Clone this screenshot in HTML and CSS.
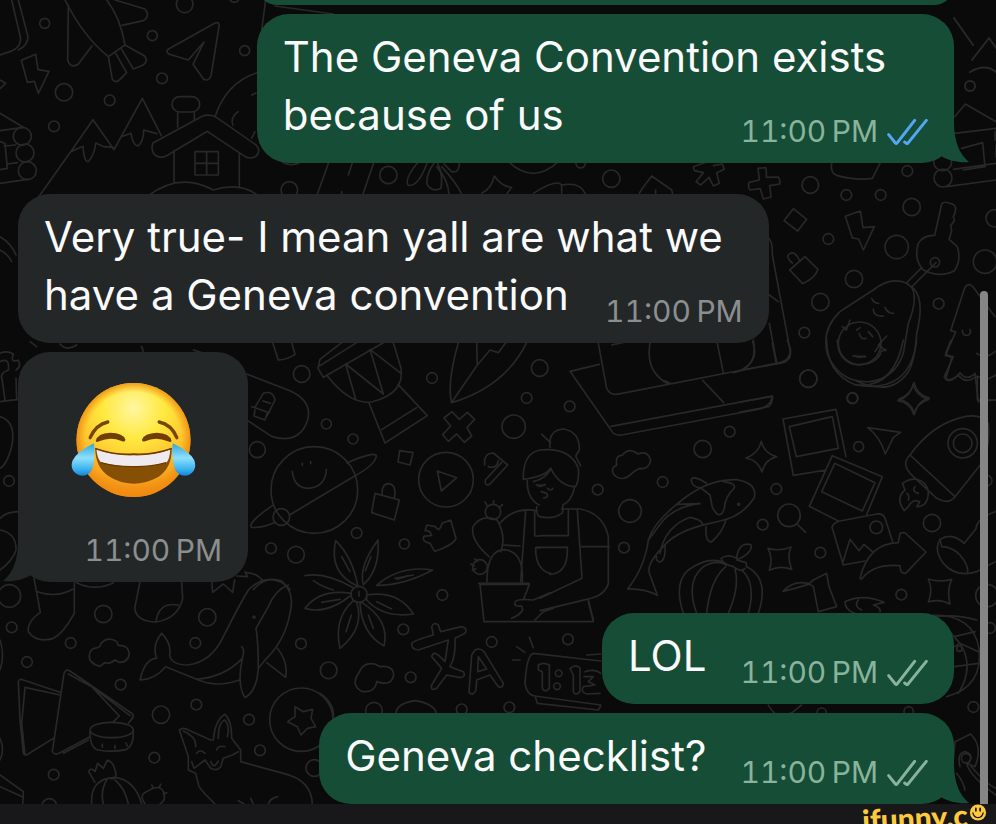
FILE: index.html
```html
<!DOCTYPE html>
<html lang="en">
<head>
<meta charset="utf-8">
<meta name="viewport" content="width=device-width, initial-scale=1">
<title>Chat</title>
<link rel="stylesheet" href="styles.css">
</head>
<body>
<svg class="defs" aria-hidden="true">
  <symbol id="ticks" viewBox="0 0 126 84"><path d="M8 53L28 78Q31 81 34 77L86 10M56 75L61 79Q64 81 67 77L121 10"/></symbol>
  <symbol id="tail" viewBox="0 0 45 40"><path d="M30 0C30 17 35 31 45 39C36 40 25 38 17 33L8 20L16 0Z"/></symbol>
  <symbol id="spark" viewBox="-50 -50 100 100"><path d="M0-46Q8-10 46 0Q10 10 2 46Q-10 10-46 4Q-8-10 0-46Z"/></symbol>
</svg>
<main class="chat">
  <svg class="wallpaper" viewBox="0 0 996 804" preserveAspectRatio="xMinYMin slice" aria-hidden="true">
    <g transform="scale(.33333)">
      <circle cx="134" cy="70" r="15"/><circle cx="457" cy="107" r="15"/><circle cx="554" cy="13" r="25"/><circle cx="734" cy="152" r="15"/><circle cx="486" cy="235" r="16"/><circle cx="192" cy="277" r="26"/><circle cx="329" cy="301" r="16"/><circle cx="162" cy="379" r="16"/><circle cx="703" cy="-8" r="15"/>
      <path d="M35 0L62 115Q62 145 30 155L0 165M55 0L84 110Q84 135 55 150"/>
      <path d="M195 0Q250 110 325 170L375 135Q360 50 320 0M205 15L203 180Q212 208 235 192L276 138M345 0L435 27Q452 48 430 62L366 76M325 170L337 238Q347 252 360 238L380 218L347 160M375 135L434 168Q445 185 430 195L400 207L365 148"/>
      <path d="M645 69Q660 64 657 80L633 228Q625 245 611 238L579 193L612 126L565 180L506 162Q495 153 507 146Z"/>
      <path d="M64 181L107 163L114 209L147 214L115 280L103 244L82 247ZM0 240L17 250L0 266"/>
      <path d="M0 340L70 382L0 392M0 425L15 430L22 505L0 509M12 438L47 435M20 492L53 488M0 550L83 538"/><circle cx="67" cy="409" r="27"/><circle cx="75" cy="459" r="27"/><circle cx="82" cy="512" r="27"/>
      <path d="M60 670L212 455L279 359L342 449L427 295L484 407M212 455L249 439Q253 490 266 484Q284 463 287 429L312 440L340 442M368 409L393 400Q400 440 416 437Q431 422 431 390L470 401"/>
      <rect x="516" y="290" width="83" height="46" rx="23"/><path d="M533 338V382M583 338V358"/>
      <path d="M460 428L608 348Q627 342 646 350L767 434Q785 451 768 469Q748 480 731 467L622 394L500 467Q475 479 460 459Q452 442 460 428ZM522 452V548M718 462V563M585 455H655V525H585ZM620 455V525M585 490H655M445 587Q540 515 640 570Q720 545 775 587"/>
      <path d="M645 350Q680 245 775 217M714 335Q690 355 699 375M755 285L768 279M755 415L765 395"/>
      <path d="M797 0L785 90M825 18L1000 42"/>
    </g>
    <g transform="translate(260 130) scale(.33333)">
      <circle cx="88" cy="180" r="25"/><circle cx="385" cy="135" r="26"/><circle cx="1054" cy="146" r="26"/><circle cx="962" cy="100" r="14"/>
      <path d="M58 90Q95 118 130 90M207 95L173 190M278 95L265 135M342 95L308 195M245 185V200M475 95Q430 150 445 166Q475 172 502 97M525 95Q495 135 502 165Q520 188 543 175Q550 130 530 95M545 110Q590 160 607 195M530 110Q565 150 567 195M598 95Q600 130 575 125L552 102M745 95Q820 165 895 95M665 190Q695 175 703 138Q725 170 755 172L740 192M820 190Q890 145 905 165V190M905 165Q960 155 975 190M1138 190L1145 178L1175 138L1235 180L1238 192M1187 180V190"/>
      <path d="M1338 97L1300 110L1303 122L1330 128L1308 155L1322 165L1347 142L1360 168L1378 160L1370 128L1393 118L1387 102L1360 107"/>
    </g>
    <g transform="translate(700 90) scale(.33333)">
      <path d="M764 80L796 42L888 95M764 130L888 115M785 175L848 158L855 230L790 240M885 125V150M888 165V200M740 290L888 270M760 238L888 220"/><circle cx="728" cy="215" r="27"/><circle cx="729" cy="264" r="27"/>
    </g>
    <g transform="translate(740 160) scale(.33333)">
      <path d="M54 25L76 23Q80 27 79 52L114 51Q122 57 119 72L89 77L93 111L70 117L61 86L30 90Q23 83 27 67L58 60ZM275 10Q270 38 290 46Q345 62 397 55L420 10M160 146L200 178L173 213L132 182ZM149 330L195 290L234 328Q225 355 188 371ZM157 309Q135 290 149 281Q165 272 178 300M316 169L361 153L369 203L403 200L370 270L356 237L337 234Z"/>
      <circle cx="211" cy="75" r="25"/><circle cx="319" cy="105" r="16"/><circle cx="422" cy="105" r="16"/><circle cx="502" cy="33" r="16"/><circle cx="515" cy="141" r="26"/><circle cx="470" cy="261" r="35"/><circle cx="265" cy="237" r="16"/><circle cx="342" cy="357" r="26"/><circle cx="241" cy="426" r="26"/><circle cx="193" cy="518" r="16"/><circle cx="205" cy="656" r="26"/><circle cx="338" cy="714" r="16"/><circle cx="596" cy="431" r="16"/><circle cx="735" cy="305" r="35"/><circle cx="764" cy="175" r="26"/>
      <path d="M584 226L605 132Q613 120 642 135Q653 145 640 170L643 182L632 197L635 213L627 238L652 260Q665 300 643 332Q600 355 550 330Q520 298 535 250Q550 225 584 226ZM588 308L515 381M543 325L499 369L518 384M499 369Q450 350 400 390Q345 425 300 455Q242 510 263 585Q300 670 390 665Q465 655 490 580L505 490Q535 415 515 382M350 664Q455 710 505 635Q525 600 530 520Q555 420 520 384"/><circle cx="585" cy="307" r="14"/><circle cx="359" cy="550" r="64"/>
      <path d="M395 415Q400 430 416 430M435 442Q442 460 461 460M400 447Q400 470 430 468M307 500L319 510L330 480M350 510L360 503M358 520Q362 540 378 535M385 515L398 530M440 528L415 555L437 572M340 587Q358 595 375 588"/>
      <path d="M765 470L700 382Q683 362 672 390L632 512L647 516L616 587L640 590L613 650Q620 670 655 646Q680 675 710 648L738 660L768 645M667 510Q667 530 685 525Q695 520 690 508M712 650V720H765M710 580Q735 600 765 575"/>
      <path d="M84 233Q98 242 97 285L151 575Q155 598 130 608L0 632M88 405L115 425M88 490L110 608M38 545Q58 600 10 626M0 726L98 709Q97 733 85 740L0 756"/>
      <use href="#spark" x="472" y="664" width="100" height="100"/>
    </g>
    <g transform="translate(0 200) scale(.33333)">
      <path d="M0 110Q35 130 48 165M0 150Q22 160 35 185M0 460Q20 450 40 462Q30 490 55 480Q65 500 48 510M0 485Q30 470 25 510Q0 520 5 535M5 530L15 600M48 535L50 600M0 605L55 598M0 650Q50 665 35 740Q20 795 0 805M0 955Q20 935 55 935M0 990Q50 1000 48 1050Q40 1080 0 1110"/><circle cx="27" cy="843" r="16"/>
      <path d="M430 455Q420 430 428 445M580 450L620 462M110 440L90 425M180 432Q200 455 230 435"/>
    </g>
    <g transform="translate(240 330) scale(.33333)">
      <circle cx="185" cy="132" r="25"/><circle cx="259" cy="282" r="15"/><circle cx="339" cy="327" r="15"/><circle cx="52" cy="359" r="24"/><circle cx="350" cy="609" r="16"/><circle cx="93" cy="655" r="16"/><circle cx="168" cy="674" r="25"/><circle cx="493" cy="642" r="15"/><circle cx="576" cy="144" r="16"/><circle cx="899" cy="114" r="25"/><circle cx="860" cy="204" r="16"/><circle cx="821" cy="290" r="35"/>
      <path d="M98 38L115 90Q145 88 165 73L155 38M20 132L150 182Q218 213 203 270Q178 345 95 319L20 270M44 233L70 190Q98 180 105 210L80 260M35 230L88 248M45 240L42 258L75 270L82 248M69 213L91 220"/>
      <path d="M305 38L240 88L234 115L250 142L430 38M240 107L350 38M263 139Q330 225 395 216Q495 190 483 115L460 38M317 102L347 208M317 102L430 192L390 58L483 130M387 219L435 339L562 257L474 163M425 299L530 233"/>
      <path d="M655 38Q620 160 635 218Q795 170 860 38M710 38L712 105L634 218M712 105L750 60L775 68L797 38M636 245L658 268L682 247L704 268L681 292L695 318L673 337L650 312L625 334L608 314L632 288L612 264Z"/>
      <circle cx="223" cy="480" r="130"/><path d="M157 425Q162 475 207 475Q257 470 259 418M187 400V406M212 395V401M320 399Q405 362 409 378Q405 405 344 438L150 554M98 526Q20 580 35 592Q65 595 107 577"/><circle cx="124" cy="561" r="25"/>
      <path d="M479 362L519 368L510 405L474 396ZM405 490L478 510L463 570L395 548ZM427 495Q423 463 446 461Q471 465 463 505"/><circle cx="618" cy="449" r="82"/><path d="M592 423L650 443L604 483ZM734 405Q730 370 760 369L803 405L750 462Q733 470 736 450L785 397M745 410Q770 418 775 392"/>
      <path d="M561 585L586 590Q598 610 606 580L632 570L648 625Q640 645 584 664L570 640Q545 635 551 619L575 616Q570 600 555 602Z"/>
      <path d="M287 632Q337 680 354 769Q265 730 287 632ZM414 630Q420 720 370 764Q355 710 414 630ZM578 720Q490 767 410 766Q480 705 578 720ZM195 737Q255 725 340 773M220 752Q245 770 280 780M305 680L330 725M393 680L376 722M472 748L505 737"/>
      <path d="M20 728Q55 730 70 755M40 779Q80 735 125 753L150 779"/>
      <circle cx="759" cy="546" r="23"/><path d="M741 526L735 516M761 522V512M779 532L787 524M747 680Q690 630 699 590Q725 550 771 570Q799 615 783 665M741 755Q740 660 794 659Q852 665 847 755M716 760H867M692 702L703 707M705 687L712 695M697 721L707 716"/><circle cx="720" cy="711" r="22"/>
      <path d="M862 452Q860 505 898 525M850 448Q848 370 900 360M850 448Q915 440 932 415M889 464Q900 475 914 463M780 580Q820 530 890 542M857 542L842 755M787 645L840 648M884 540V618H900M887 653H900M887 653Q886 721 933 731"/>
    </g>
    <g transform="translate(540 340) scale(.33333)">
      <path d="M215 15L260 5M175 10L200 145Q210 165 230 163L720 68Q750 60 752 30L742 0M178 73L90 94L213 270Q222 288 245 285L660 207Q695 195 697 168L213 259M488 121L551 188M330 10Q315 95 385 132M375 122L390 130M532 10L550 98M640 0Q655 85 580 98M697 10L708 65"/>
      <path d="M860 0Q860 100 945 134Q1060 150 1090 0M945 134Q1110 165 1130 0M892 0Q895 70 955 75Q1010 70 1022 40M1022 35L1038 28M1005 35L1018 15M940 48L977 50M1233 0L1217 40L1235 55L1217 118Q1235 130 1260 98Q1280 125 1305 100L1315 185L1365 180"/>
      <circle cx="89" cy="199" r="16"/><circle cx="805" cy="116" r="26"/><circle cx="937" cy="175" r="16"/><circle cx="569" cy="275" r="16"/><circle cx="488" cy="327" r="26"/><circle cx="368" cy="426" r="16"/><circle cx="173" cy="449" r="16"/><circle cx="270" cy="513" r="34"/><circle cx="252" cy="623" r="16"/><circle cx="709" cy="447" r="16"/><circle cx="668" cy="554" r="16"/><circle cx="841" cy="638" r="16"/><circle cx="956" cy="320" r="15"/><circle cx="1176" cy="549" r="26"/><circle cx="1084" cy="764" r="16"/><circle cx="1340" cy="422" r="16"/><circle cx="1341" cy="767" r="34"/>
      <path d="M30 322Q25 270 70 267Q120 275 118 330L107 348L122 378M0 330Q90 320 115 385Q118 420 107 440Q60 440 32 385Q20 415 -20 425M104 440Q95 485 68 495V518Q40 540 0 530Q-12 525 -10 500M-5 436L16 435M22 445Q35 455 38 445M4 455L20 460Q28 472 10 474M65 507H120Q190 520 205 590V730Q195 768 140 778L0 812M85 512V587H0M112 510L126 715L0 775M-10 622H82Q85 700 30 703M125 620H208M145 780L160 840M5 283L32 308"/>
      <path d="M230 376Q225 345 247 346Q265 320 294 342Q325 330 332 362Q325 390 300 385Q280 395 276 400Q245 430 220 402Q212 380 230 376Z"/>
      <path d="M410 493Q500 415 590 419Q655 430 642 475Q605 530 540 543L485 556Q400 580 370 620Q315 675 330 705L352 766Q310 745 263 747Q315 680 325 600Q340 550 410 493ZM500 430Q460 405 454 418Q452 440 483 444L510 465L517 502Q540 545 553 505Q555 470 582 445Q590 430 550 425M410 493L480 491Q395 500 355 560L325 600M360 640Q375 560 450 532Q490 540 487 555M498 560Q495 605 514 606Q545 580 557 543M375 615Q378 660 360 667Q345 660 350 650"/><circle cx="596" cy="493" r="3"/>
      <path d="M430 820Q400 730 445 690Q500 650 545 665M470 820Q435 725 490 680Q530 657 560 675M500 820Q510 720 557 680M565 820Q600 740 585 688M625 820Q650 730 605 690M655 820Q690 715 620 680L618 668L590 660L610 650Q640 630 632 614Q595 605 590 655Q565 640 543 655Q545 670 580 680Q605 700 615 685"/>
      <path d="M729 237L888 208L918 350M729 237L760 406L858 390M748 260L877 230L895 325L769 350ZM877 347L1027 410L980 524M877 347L808 499L895 543M884 370L1005 428L967 513L845 455ZM910 675L876 562Q880 548 900 543L1010 522Q1030 520 1035 535L1058 605M910 675L975 663M908 668L930 598L957 632L972 613L1000 637"/><circle cx="1009" cy="562" r="19"/>
      <path d="M960 715Q985 610 1075 608L1080 580Q1095 575 1100 583L1158 636L1097 700Q1080 702 1080 677Q1000 670 965 717ZM983 263L1082 277L1060 292L1036 342Q1020 290 983 263Z"/>
      <circle cx="747" cy="526" r="34"/><path d="M771 552L797 577M684 625Q720 635 753 621Q740 650 755 688Q720 675 688 691Q700 655 684 625ZM1165 717Q1200 728 1235 718Q1220 750 1230 792Q1200 775 1165 786Q1180 750 1165 717Z"/>
      <path d="M1110 345L1245 470L1325 370M1110 345Q1170 260 1255 235Q1320 215 1345 250Q1352 320 1325 370M1110 345Q1080 375 1120 410L1190 475Q1225 495 1245 470M1130 418Q1160 425 1165 455Q1165 500 1130 500Q1145 480 1135 485Q1120 475 1105 500L1093 512Q1065 475 1095 450L1087 430Q1110 415 1130 418ZM1125 440Q1115 455 1135 460M1105 480Q1110 465 1100 460"/><circle cx="1268" cy="310" r="44"/><circle cx="1268" cy="310" r="28"/>
      <path d="M1200 598Q1235 575 1273 610L1308 566Q1310 535 1365 515M1200 598Q1180 630 1210 670Q1250 715 1310 695L1365 665M1200 598L1205 620Q1235 620 1260 645Q1285 675 1283 695"/>
      <path d="M729 754L765 745L805 733L820 720L860 700L867 740L890 800L835 815L820 740L805 730Q760 720 729 754ZM915 785Q970 760 1032 787L1000 795Q1025 805 1020 815M915 785Q915 810 945 820M955 780Q940 800 965 810M1150 840Q1220 815 1310 840"/>
      <use href="#spark" x="1070" y="128" width="100" height="100"/><use href="#spark" x="614" y="300" width="100" height="100"/>
    </g>
    <g transform="translate(0 570) scale(.33333)">
      <circle cx="28" cy="78" r="34"/><circle cx="35" cy="172" r="16"/><circle cx="310" cy="132" r="26"/><circle cx="212" cy="219" r="16"/><circle cx="81" cy="276" r="16"/><circle cx="362" cy="344" r="16"/><circle cx="622" cy="142" r="26"/><circle cx="586" cy="219" r="16"/><circle cx="903" cy="221" r="16"/><circle cx="589" cy="404" r="16"/><circle cx="483" cy="434" r="26"/><circle cx="747" cy="449" r="16"/><circle cx="780" cy="541" r="16"/><circle cx="463" cy="563" r="16"/><circle cx="161" cy="614" r="16"/><circle cx="943" cy="594" r="25"/><circle cx="148" cy="708" r="22"/>
      <path d="M102 25L121 127Q80 155 85 185Q110 220 160 205Q190 190 223 130V25M112 65Q170 85 218 58M230 38Q285 65 340 38M420 35L404 115Q410 155 468 156Q535 145 548 85L545 38M468 156Q475 95 535 105M635 35L638 67L670 42L698 67L704 30M710 18L742 20L735 5M0 210Q15 255 0 300M0 505Q15 540 0 570M0 615L70 665Q70 680 68 702M0 650L67 680"/>
      <path d="M282 235Q300 235 303 220Q325 198 350 215L355 226Q385 225 388 250Q385 278 357 277L345 270Q325 285 315 277L300 289Q265 280 268 255Q270 240 282 235Z"/>
      <path d="M485 190Q515 220 509 255Q513 285 565 285Q635 275 670 200Q715 110 745 60Q795 10 850 40Q885 70 870 130Q855 210 800 265L775 295Q770 365 735 383Q710 345 727 265Q675 320 590 328L497 290Q465 328 420 330Q435 265 470 265Q455 225 485 190ZM865 45Q825 60 805 110L768 175Q775 215 775 295M727 265Q735 240 725 230M590 328Q650 355 718 330M832 235Q865 275 857 322L800 278"/><circle cx="762" cy="141" r="3"/>
      <path d="M55 335L60 450L70 550Q75 560 88 550L160 505M55 335Q58 325 70 330L180 367M75 352L180 375M75 352L65 460L75 555M192 310Q198 295 210 303L398 432Q402 440 395 448L385 460M192 310L157 545Q165 558 180 548L270 500M205 312L275 350L358 438L340 455M275 350L390 437M190 550L265 510"/>
      <ellipse cx="335" cy="480" rx="65" ry="23"/><path d="M270 485Q270 535 295 540Q340 548 380 538Q402 525 400 482M307 522V532M345 526V536M378 519L382 528"/>
      <path d="M632 510L640 510Q645 450 675 433Q695 450 695 505L722 540V575L850 610Q935 630 937 702M538 480Q550 470 565 480L632 510M538 480L565 560V600L587 610L597 650L615 672L645 702M550 483Q590 500 587 530M655 505Q655 455 675 450Q690 470 682 500M590 550Q600 535 615 550M650 540Q655 525 675 530M575 575L582 595L615 570L632 595Q650 605 662 590L670 565L697 555L715 545M633 575Q640 600 655 573M715 692L732 702M752 685L760 702M805 702Q810 685 833 680"/>
      <circle cx="904" cy="449" r="95"/><path d="M885 410L910 425L938 418L933 445L947 470L922 475L903 495L892 470L863 455L885 440Z"/>
      <path d="M285 637L266 605Q272 590 285 605L293 580Q305 590 310 595L322 570Q340 575 345 600Q355 630 330 625M275 702Q270 625 345 622Q405 630 425 702M310 702Q300 660 322 627M385 702Q375 655 345 630M435 702Q415 675 440 665Q480 640 490 665Q500 690 480 702M460 655L455 645M477 653L482 643M490 672L500 668"/>
    </g>
    <g transform="translate(320 560) scale(.33333)">
      <circle cx="367" cy="105" r="16"/><circle cx="250" cy="208" r="16"/><circle cx="515" cy="246" r="16"/><circle cx="744" cy="238" r="16"/><circle cx="26" cy="331" r="25"/><circle cx="272" cy="352" r="16"/><circle cx="425" cy="448" r="16"/><circle cx="568" cy="442" r="16"/><circle cx="162" cy="452" r="25"/><circle cx="117" cy="103" r="24"/>
      <path d="M117 95V108M140 105Q235 90 280 162Q190 175 140 120ZM125 127Q210 180 192 258Q125 220 120 130ZM110 127Q135 205 60 265Q40 175 100 122ZM94 105Q20 165 -45 145Q0 85 94 100M225 55L280 45M170 125L215 147M145 165L160 205M94 165L78 215M60 118L5 127"/>
      <path d="M118 336Q130 305 165 312L180 320Q220 315 221 345Q215 380 170 365Q165 400 125 394Q90 375 118 336ZM275 250Q285 240 340 225L335 200Q340 185 355 195L362 215L425 200Q445 205 435 220L405 235Q408 290 390 320L430 335Q440 350 420 353L380 345L350 385Q330 395 335 375L365 325L335 290Q340 270 360 290L375 305L385 240L295 270Q275 270 275 250ZM465 270Q480 262 492 275L550 370Q550 385 535 380L510 345L470 360L468 390Q460 410 447 397L455 285ZM475 290L473 335L500 327Z"/>
      <path d="M578 300H600M590 260L615 277M628 232L640 263M640 280Q620 285 615 370Q620 405 645 408L842 435M640 280L842 303M800 285L842 282M645 408L652 430L835 450L842 438"/><path d="M655 315Q670 305 688 315V385Q675 400 667 385V335L655 330ZM750 325Q770 310 780 325V395Q765 410 760 395V345ZM795 335Q825 325 842 340M792 350L820 350L805 365L825 375L790 380Q780 395 800 402L840 400"/><circle cx="716" cy="340" r="10"/><circle cx="711" cy="379" r="10"/>
      <path d="M228 460Q230 430 285 422Q340 430 350 460M0 400Q45 430 40 475M480 73H628L610 120M480 73L492 185H820L805 125M585 127Q590 115 640 120L690 98M585 127Q580 140 605 138L608 150Q600 165 575 175M645 180L670 155L700 145"/>
    </g>
    <g transform="translate(720 600) scale(.33333)">
      <circle cx="810" cy="84" r="16"/><circle cx="760" cy="321" r="16"/><circle cx="305" cy="338" r="14"/><circle cx="566" cy="334" r="14"/>
      <path d="M640 45Q760 45 777 145Q790 260 680 290M650 50L720 130Q765 200 715 280M703 110L765 95M703 200L775 190M703 140L720 130L775 155"/><circle cx="718" cy="146" r="8"/>
      <path d="M705 425L752 402Q790 440 765 500L740 490M705 425L700 480M720 500Q710 460 735 455Q765 465 745 490Q800 555 828 565M740 490Q750 530 828 585M710 520Q730 545 735 570M145 315Q170 365 220 335L245 315"/><circle cx="738" cy="475" r="14"/>
    </g>
    <path d="M954 18L973 45M972 60L989 38L996 48M970 72Q985 63 996 72"/><circle cx="970" cy="86" r="5"/>
  </svg>

  <div class="bubble out wide" aria-hidden="true"></div>

  <article class="bubble out wide">
    <p>The Geneva Convention exists because of us<span class="meta"><time>11:00&#8239;PM</time><svg class="ticks read" role="img" aria-label="Read"><use href="#ticks"/></svg></span></p>
    <svg class="tail" aria-hidden="true"><use href="#tail"/></svg>
  </article>

  <article class="bubble in long turn">
    <p>Very true- I mean yall are what we have a Geneva convention<span class="meta"><time>11:00&#8239;PM</time></span></p>
  </article>

  <article class="bubble in sticker">
    <svg class="emoji" viewBox="30 36 380 348" role="img" aria-label="Face with tears of joy">
      <defs>
        <radialGradient id="face" cx=".5" cy=".22" r=".78"><stop offset="0" stop-color="#fff6a0"/><stop offset=".35" stop-color="#ffe93f"/><stop offset=".68" stop-color="#fdc02c"/><stop offset="1" stop-color="#ef7d0c"/></radialGradient>
        <radialGradient id="edge"><stop offset=".84" stop-color="#f49b16" stop-opacity="0"/><stop offset="1" stop-color="#f08c10" stop-opacity=".85"/></radialGradient>
        <linearGradient id="tear" x2="0" y2="1"><stop offset="0" stop-color="#2fa5d8"/><stop offset=".45" stop-color="#8fe0fb"/><stop offset=".8" stop-color="#3bb3f0"/><stop offset="1" stop-color="#1583da"/></linearGradient>
      </defs>
      <circle cx="220" cy="210" r="171" fill="url(#face)"/><circle cx="220" cy="210" r="171" fill="url(#edge)"/>
      <path d="M90 203Q108 163 143 156M297 156Q333 163 350 203" fill="none" stroke="#774500" stroke-width="10" stroke-linecap="round"/>
      <path d="M107 212Q112 190 150 188Q190 189 196 209Q194 218 184 213Q150 199 117 214Q108 219 107 212ZM245 209Q252 190 290 188Q329 190 334 212Q333 219 323 214Q287 199 255 214Q246 217 245 209Z" fill="#713e02"/>
      <path d="M105 235Q164 256 220 252Q278 255 335 235Q335 295 294 321Q258 341 220 341Q177 340 146 319Q106 293 105 235Z" fill="#855006"/>
      <path d="M109 239Q164 258 220 256Q276 258 330 239Q329 268 318 278Q272 291 220 290Q167 290 122 277Q111 264 109 239Z" fill="#eeeaf0"/>
      <path d="M105 235Q164 256 220 252Q278 255 335 235M122 278Q168 291 220 290Q273 291 318 278" fill="none" stroke="#6d3a02" stroke-width="4"/>
      <path d="M101 220Q107 254 96 298Q83 323 55 315Q27 301 37 272Q50 245 101 220ZM338 220Q332 255 344 298Q357 323 386 315Q413 301 402 270Q388 244 338 220Z" fill="url(#tear)"/>
    </svg>
    <div class="meta"><time>11:00&#8239;PM</time></div>
    <svg class="tail" aria-hidden="true"><use href="#tail"/></svg>
  </article>

  <article class="bubble out turn">
    <p>LOL<span class="meta"><time>11:00&#8239;PM</time><svg class="ticks" role="img" aria-label="Delivered"><use href="#ticks"/></svg></span></p>
  </article>

  <article class="bubble out">
    <p>Geneva checklist?<span class="meta"><time>11:00&#8239;PM</time><svg class="ticks" role="img" aria-label="Delivered"><use href="#ticks"/></svg></span></p>
    <svg class="tail" aria-hidden="true"><use href="#tail"/></svg>
  </article>

  <div class="scroll-thumb"></div>
</main>
<footer class="bar">
  <div class="brand"><span>ifunny.c</span><svg class="smile" viewBox="0 0 20 20" aria-hidden="true"><circle cx="10" cy="10" r="9.5" fill="#fdca3d"/><path d="M7.5 5V8M12.5 5V8" stroke="#18181a" stroke-width="2" stroke-linecap="round"/><path d="M4 10.5Q5 16 10 16Q15 16 16 10.5" fill="none" stroke="#18181a" stroke-width="1.5" stroke-linecap="round"/></svg></div>
</footer>
</body>
</html>
```
FILE: styles.css
```css
* { box-sizing: border-box; }

body {
  margin: 0;
  min-height: 100vh;
  display: flex;
  flex-direction: column;
  background: #18181a;
  font-family: Inter, "Liberation Sans", sans-serif;
}

.defs { position: absolute; width: 0; height: 0; }

.chat {
  position: relative;
  flex: 1 1 0;
  min-height: 0;
  display: flex;
  flex-direction: column;
  justify-content: flex-end;
  gap: 9px;
  padding: 0 42px 0 18px;
  overflow: hidden;
  background: #0a0a0a;
}

.wallpaper {
  position: absolute;
  inset: 0;
  width: 100%;
  height: 100%;
  fill: none;
  stroke: #282828;
  stroke-width: 5;
  stroke-linejoin: round;
  stroke-linecap: round;
}
.wallpaper > path, .wallpaper > circle { stroke-width: 2; }

.bubble {
  position: relative;
  flex: none;
  min-height: 40px;
  padding: 14px 26px 19px;
  border-radius: 32px;
  color: #fafafa;
}
.bubble p {
  display: flow-root;
  margin: 0;
  font-size: 42px;
  line-height: 58px;
}

.out { align-self: flex-end; background: #154d37; --fill: #154d37; --meta: #8ab39c; }
.in { align-self: flex-start; background: #232728; --fill: #232728; --meta: #8c8f90; }
.wide { width: 74.5%; }
.long { width: 80.2%; }
.turn { margin-top: 22px; }

.sticker {
  display: flex;
  flex-direction: column;
  justify-content: space-between;
  align-items: center;
  width: 230px;
  height: 230px;
  padding-top: 30px;
}
.emoji { width: 127px; height: 116px; }

.meta {
  display: flex;
  align-items: center;
  gap: 8px;
  height: 26px;
  color: var(--meta);
  font-size: 30px;
  line-height: 26px;
  white-space: nowrap;
  font-variant-numeric: tabular-nums;
}
.bubble p .meta {
  float: right;
  margin: 32px 0 0 34px;
}
.sticker .meta { align-self: flex-end; }

.ticks {
  width: 42px;
  height: 28px;
  fill: none;
  stroke: currentColor;
  stroke-width: 9;
  stroke-linecap: round;
}
.read { color: #53a6f4; }

.tail {
  position: absolute;
  right: -15px;
  bottom: 0;
  width: 45px;
  height: 40px;
  fill: var(--fill);
}
.in .tail { right: auto; left: -15px; transform: scaleX(-1); }

.scroll-thumb {
  position: absolute;
  top: 291px;
  right: 8px;
  bottom: 0;
  width: 8px;
  border-radius: 4px 4px 0 0;
  background: #858585;
}

.bar {
  height: 20px;
  overflow: hidden;
  padding-right: 8px;
  background: #18181a;
}
.brand {
  display: flex;
  justify-content: flex-end;
  color: #fdca3d;
  font: 900 30px/26px Lato, "Open Sans", sans-serif;
}
.brand span { transform: rotate(-3deg); }
.smile { width: 20px; height: 17px; }
```
